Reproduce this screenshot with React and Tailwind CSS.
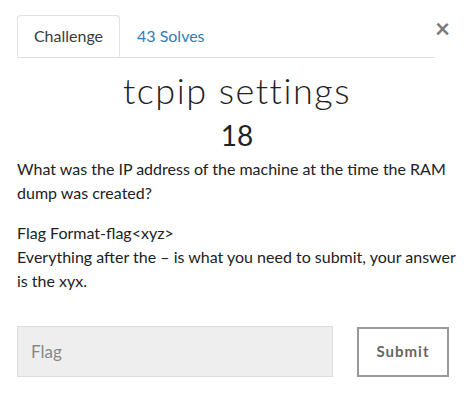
import React from 'react';

const App = () => {
  return (
    <div className="w-[474px] h-[401px] bg-white font-['Lato',sans-serif] text-[#212529] relative">
      {/* close button */}
      <button className="absolute right-[24px] top-[15px] text-[#7a7a7a] text-[26px] font-bold leading-none">
        ×
      </button>

      <div className="pl-[17px] pr-[14px] pt-[15px]">
        {/* tabs */}
        <div className="flex mr-[25px] border-b border-[#dee2e6]">
          <div className="w-[103px] h-[42px] -mb-px flex items-center justify-center border border-[#dee2e6] border-b-white rounded-t-[4px] text-[16px] text-[#3c3c3c] bg-white">
            Challenge
          </div>
          <div className="h-[42px] px-[17px] flex items-center text-[16px] text-[#337ab7]">
            43 Solves
          </div>
        </div>

        {/* title */}
        <h2 className="mt-[11px] pr-[3px] text-center text-[36px] leading-[42px] font-light tracking-[1.5px] text-[#222]">
          tcpip settings
        </h2>
        <h3 className="mt-[7px] pr-[3px] text-center text-[28px] leading-[34px] text-[#222]">18</h3>

        {/* description */}
        <div className="mt-[5px] text-[16px] leading-[24px] text-[#222]">
          <p>What was the IP address of the machine at the time the RAM dump was created?</p>
          <p className="mt-[16px]">
            Flag Format-flag&lt;xyz&gt;
            <br />
            Everything after the – is what you need to submit, your answer is the xyx.
          </p>
        </div>

        {/* submit row */}
        <div className="mt-[33px] flex items-center gap-[24px]">
          <input
            placeholder="Flag"
            className="w-[316px] h-[51px] bg-[#eeeeee] border border-[#dddddd] px-[13px] text-[17px] placeholder-[#888] outline-none"
          />
          <button className="w-[92px] h-[50px] border-2 border-[#999] text-[#666] text-[15px] font-bold tracking-[1px] bg-white">
            Submit
          </button>
        </div>
      </div>
    </div>
  );
};

export default App;
